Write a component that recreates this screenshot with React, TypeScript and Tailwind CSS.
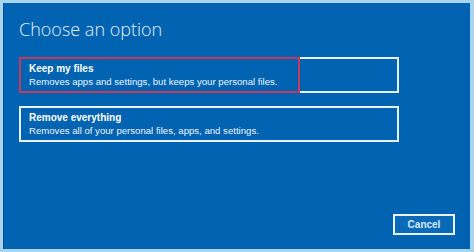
const options = [
  {
    title: "Keep my files",
    desc: "Removes apps and settings, but keeps your personal files.",
    selected: true,
  },
  {
    title: "Remove everything",
    desc: "Removes all of your personal files, apps, and settings.",
    selected: false,
  },
];

const App = () => {
  return (
    <div className="w-[474px] h-[252px] bg-[#a9d4ee] pt-[3px] pl-[3px] pr-[4px] pb-[3px] font-['Liberation_Sans',sans-serif]">
      <div className="w-full h-full bg-[#0063b1] border-l border-[#0a4f8c] flex flex-col pl-[15px] pr-[15px]">
        <h1 className="mt-[14px] h-[24px] text-[18px] leading-[24px] font-light text-[#e3f2fd] font-['Open_Sans',sans-serif]">
          Choose an option
        </h1>
        <div className="mt-[16px] flex flex-col gap-[13px] w-[380px]">
          {options.map((o) => (
            <div
              key={o.title}
              className="relative h-[36px] border-2 border-[#e6f2fb] pl-[8px] pt-[3px] text-white"
            >
              {o.selected && (
                <div className="absolute -left-[2px] -top-[2px] w-[281px] h-[36px] border-2 border-[#c7395a]" />
              )}
              <p className="text-[10px] leading-[13px] font-bold">{o.title}</p>
              <p className="text-[9.6px] leading-[13px] text-[#edf6fd]">{o.desc}</p>
            </div>
          ))}
        </div>
        <div className="flex-1" />
        <div className="flex justify-end mb-[14px]">
          <button className="w-[62px] h-[21px] border-2 border-[#e6f2fb] bg-[#0a6ab8] text-[10px] font-bold text-[#d6ecfb]">
            Cancel
          </button>
        </div>
      </div>
    </div>
  );
};

export default App;
